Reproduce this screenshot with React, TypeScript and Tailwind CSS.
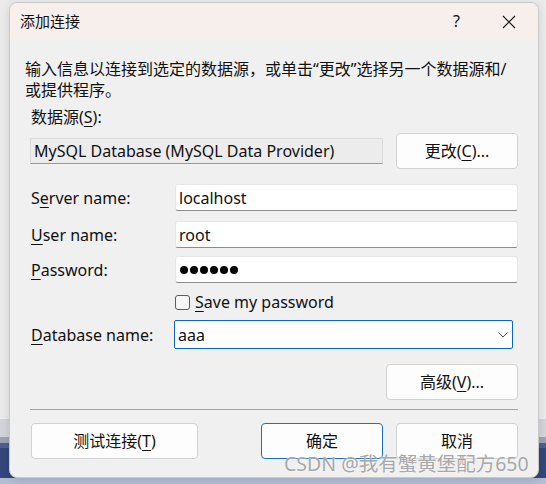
import React from 'react';

const FONT = "font-['Noto_Sans','Noto_Sans_CJK_SC',sans-serif]";

const Key: React.FC<{ children: React.ReactNode }> = ({ children }) => (
  <span className="underline underline-offset-[3px] decoration-1">{children}</span>
);

const Btn: React.FC<{ className?: string; primary?: boolean; children: React.ReactNode }> = ({
  className = '',
  primary,
  children,
}) => (
  <button
    className={`h-[36px] rounded-[4px] bg-[#fdfdfd] text-[16px] leading-[20px] text-[#111] flex items-center justify-center ${
      primary ? 'border border-[#1e6fc4]' : 'border border-[#d2d2d2]'
    } ${className}`}
  >
    {children}
  </button>
);

const Field: React.FC<{ children: React.ReactNode; className?: string }> = ({ children, className = '' }) => (
  <div
    className={`h-[27px] flex-1 bg-white border border-[#e6e6e6] border-b-[#8c8c8c] rounded-[3px] flex items-center pl-[3px] text-[16px] text-[#111] ${className}`}
  >
    {children}
  </div>
);

export default function App() {
  return (
    <div className={`relative w-[546px] h-[484px] overflow-hidden flex flex-col ${FONT}`}>
      {/* backdrop behind the dialog */}
      <div className="flex-1 bg-[#ebebeb]" />
      <div className="h-[18px] bg-[#d3d4d8]" />
      <div className="h-[6px] bg-[#9da3b6]" />
      <div className="h-[5px] bg-[#4f5f91]" />
      <div className="h-[30px] bg-[#34477b]" />
      <div className="h-[6px] bg-[#b5bdd5]" />

      {/* dialog */}
      <div className="absolute left-[9px] top-[2px] w-[530px] h-[476px] rounded-[8px] border border-[#c9c9c9] bg-[#f0f0f0] overflow-hidden shadow-[0_2px_8px_rgba(0,0,0,0.12)] flex flex-col">
        <div className="h-[36px] bg-[#f6efec] flex items-center pl-[10px] pr-[22px] text-[15px] text-[#111]">
          <span className="flex-1">添加连接</span>
          <span className="text-[16px] mr-[42px]">?</span>
          <svg width="14" height="14" viewBox="0 0 14 14" className="mt-[1px]">
            <path d="M1 1 L13 13 M13 1 L1 13" stroke="#1b1b1b" strokeWidth="1.2" />
          </svg>
        </div>

        <div className="flex flex-col px-[20px] pt-[20px] text-[#111]">
          <p className="ml-[-5px] text-[16px] leading-[21px]">
            输入信息以连接到选定的数据源，或单击“更改”选择另一个数据源和/
            <br />
            或提供程序。
          </p>

          <div className="mt-[6px] pl-[1px] text-[16px] leading-[20px]">
            数据源(<Key>S</Key>):
          </div>

          <div className="mt-[6px] h-[36px] flex items-center justify-between">
            <div className="w-[353px] h-[26px] bg-[#ececec] border border-[#dadada] border-b-[#9a9a9a] flex items-center pl-[3px] text-[16px]">
              MySQL Database (MySQL Data Provider)
            </div>
            <Btn className="w-[122px] h-[35px]">
              更改(<Key>C</Key>)...
            </Btn>
          </div>

          <div className="mt-[15px] flex items-center">
            <label className="w-[145px] pl-[1px] text-[16px]">
              S<Key>e</Key>rver name:
            </label>
            <Field>localhost</Field>
          </div>

          <div className="mt-[10px] flex items-center">
            <label className="w-[145px] pl-[1px] text-[16px]">
              <Key>U</Key>ser name:
            </label>
            <Field>root</Field>
          </div>

          <div className="mt-[8px] flex items-center">
            <label className="w-[145px] pl-[1px] text-[16px]">
              <Key>P</Key>assword:
            </label>
            <Field className="gap-[2px] pl-[4px]">
              {[0, 1, 2, 3, 4, 5].map((i) => (
                <span key={i} className="w-[8px] h-[8px] rounded-full bg-black" />
              ))}
            </Field>
          </div>

          <div className="mt-[11px] h-[16px] flex items-center pl-[145px]">
            <span className="w-[15px] h-[15px] rounded-[3px] border border-[#5c5c5c] bg-[#f7f7f7]" />
            <span className="ml-[5px] text-[16px] leading-[20px]">
              <Key>S</Key>ave my password
            </span>
          </div>

          <div className="mt-[10px] flex items-center">
            <label className="w-[144px] pl-[1px] text-[16px]">
              <Key>D</Key>atabase name:
            </label>
            <div className="w-[339px] h-[29px] bg-white border border-[#0a66c2] rounded-[2px] flex items-center pl-[3px] pr-[4px] text-[16px]">
              <span className="flex-1">aaa</span>
              <svg width="10" height="6" viewBox="0 0 10 6">
                <path d="M0.5 0.5 L5 5 L9.5 0.5" fill="none" stroke="#555" strokeWidth="1" />
              </svg>
            </div>
          </div>

          <div className="mt-[15px] flex justify-end">
            <Btn className="w-[132px]">
              高级(<Key>V</Key>)...
            </Btn>
          </div>

          <div className="mt-[9px] h-px bg-[#a3a3a3]" />

          <div className="mt-[13px] flex items-center">
            <Btn className="w-[167px] ml-[1px]">
              测试连接(<Key>T</Key>)
            </Btn>
            <div className="flex-1" />
            <Btn primary className="w-[122px]">
              确定
            </Btn>
            <Btn className="w-[122px] ml-[13px]">取消</Btn>
          </div>
        </div>
      </div>

      {/* watermark */}
      <div className="absolute left-[284px] top-[451px] text-[19.5px] leading-[26px] text-[#a8a8a8] [text-shadow:0_0_2px_rgba(255,255,255,0.8)] whitespace-nowrap">
        CSDN @我有蟹黄堡配方650
      </div>
    </div>
  );
}
